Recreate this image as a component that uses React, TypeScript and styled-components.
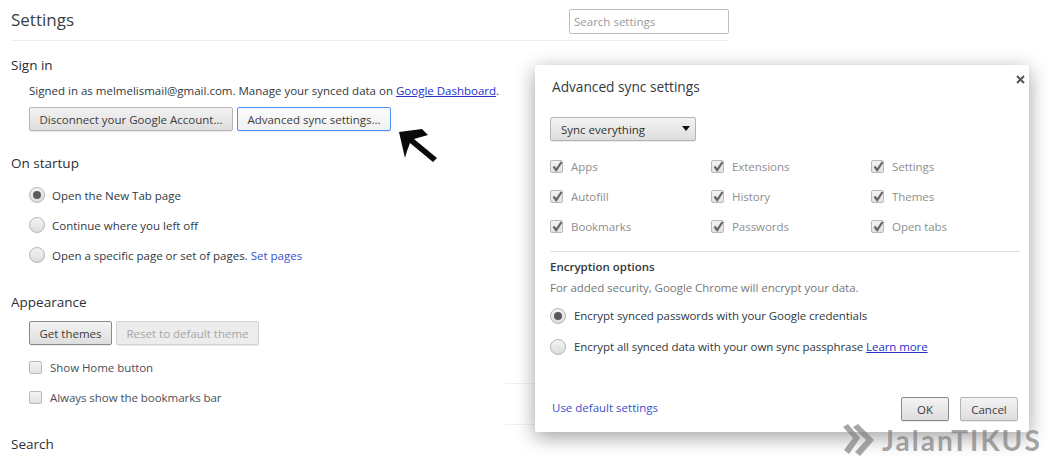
import React from "react";
import styled, { createGlobalStyle } from "styled-components";

const Global = createGlobalStyle`
  html, body { margin: 0; padding: 0; background: #fff; }
  body { width: 1059px; height: 457px; overflow: hidden; font-family: "Open Sans", "Noto Sans", sans-serif; font-size: 11.5px; color: #303942; }
`;

const Page = styled.div`
  position: relative;
  width: 1059px;
  height: 457px;
  overflow: hidden;
`;
const Main = styled.div`
  width: 718px;
  margin-left: 11px;
  display: flex;
  flex-direction: column;
`;
const Header = styled.header`
  height: 40px;
  box-sizing: content-box;
  border-bottom: 1px solid #eeeeee;
  display: flex;
  justify-content: space-between;
`;
const Title = styled.h1`
  margin: 9px 0 0;
  font-size: 17px;
  font-weight: 400;
  line-height: 22px;
  color: #3a3f45;
`;
const Search = styled.div`
  box-sizing: border-box;
  width: 160px;
  height: 25px;
  margin-top: 9px;
  border: 1px solid #bfbfbf;
  border-radius: 2px;
  padding-left: 4px;
  line-height: 23px;
  color: #9a9a9a;
`;
const Section = styled.section<{ $top: number }>`
  margin-top: ${(p) => p.$top}px;
`;
const Heading = styled.h3`
  margin: 0;
  font-size: 13.5px;
  font-weight: 400;
  line-height: 20px;
  color: #2b2f33;
`;
const Indent = styled.div<{ $top?: number }>`
  margin-left: 18px;
  margin-top: ${(p) => p.$top ?? 0}px;
`;
const TextLine = styled.div`
  line-height: 20px;
  white-space: nowrap;
`;
const Link = styled.a<{ $strong?: boolean; $lift?: number }>`
  color: ${(p) => (p.$strong ? "#2430c8" : "#3a50d0")};
  text-decoration: ${(p) => (p.$strong ? "underline" : "none")};
  padding-bottom: ${(p) => p.$lift ?? 0}px;
`;
const ButtonRow = styled.div<{ $top?: number }>`
  display: flex;
  gap: 4px;
  margin-top: ${(p) => p.$top ?? 0}px;
`;
const Button = styled.div<{ $w: number; $variant?: "focus" | "disabled" | "dark" }>`
  box-sizing: border-box;
  width: ${(p) => p.$w}px;
  height: 24px;
  border: 1px solid
    ${(p) =>
      p.$variant === "focus" ? "#4d90fe" : p.$variant === "disabled" ? "#d2d2d2" : p.$variant === "dark" ? "#8a8a8a" : "#b4b4b4"};
  border-radius: 2px;
  background: ${(p) =>
    p.$variant === "focus" ? "linear-gradient(#fbfbfb, #f1f1f1)" : p.$variant === "disabled" ? "#ececec" : "linear-gradient(#f3f3f3, #dedede)"};
  box-shadow: 0 1px 0 rgba(0, 0, 0, 0.08);
  display: flex;
  align-items: center;
  justify-content: center;
  color: ${(p) => (p.$variant === "disabled" ? "#a6a6a6" : "#3c3c3c")};
  white-space: nowrap;
`;
const RadioRow = styled.div<{ $h: number; $gap: number; $top?: number; $tight?: boolean }>`
  display: flex;
  align-items: center;
  height: ${(p) => p.$h}px;
  gap: ${(p) => p.$gap}px;
  margin-top: ${(p) => p.$top ?? 0}px;
  letter-spacing: ${(p) => (p.$tight ? "-0.08px" : "normal")};
  white-space: nowrap;
`;
const RadioDot = styled.span<{ $on?: boolean }>`
  box-sizing: border-box;
  flex: none;
  width: 16px;
  height: 16px;
  border-radius: 50%;
  border: 1px solid #b5b5b5;
  background: linear-gradient(#f4f4f4, #dcdcdc);
  display: flex;
  align-items: center;
  justify-content: center;
  &::after {
    content: "";
    display: ${(p) => (p.$on ? "block" : "none")};
    width: 8px;
    height: 8px;
    border-radius: 50%;
    background: #5a5a5a;
  }
`;
const CheckRow = styled.div<{ $muted?: boolean; $top?: number }>`
  display: flex;
  align-items: center;
  height: 30px;
  gap: 8px;
  margin-top: ${(p) => p.$top ?? 0}px;
  white-space: nowrap;
  letter-spacing: -0.05px;
  color: ${(p) => (p.$muted ? "#8e8e8e" : "#4a4f55")};
`;
const CheckBox = styled.span`
  box-sizing: border-box;
  position: relative;
  flex: none;
  width: 13px;
  height: 13px;
  border: 1px solid #b9b9b9;
  border-radius: 2px;
  background: linear-gradient(#f3f3f3, #e2e2e2);
  & svg {
    position: absolute;
    left: 0;
    top: -1px;
  }
`;
const Dialog = styled.div`
  position: absolute;
  left: 535px;
  top: 65px;
  box-sizing: border-box;
  width: 494px;
  height: 367px;
  background: #fff;
  border-radius: 2px;
  box-shadow: 0 5px 20px rgba(0, 0, 0, 0.38);
  padding: 0 9px 0 15px;
  display: flex;
  flex-direction: column;
`;
const Close = styled.div`
  position: absolute;
  right: 3px;
  top: 6px;
  width: 12px;
  height: 16px;
  display: flex;
  align-items: center;
  justify-content: center;
`;
const DialogTitle = styled.h2`
  margin: 11px 0 0 2px;
  font-size: 13.7px;
  font-weight: 400;
  line-height: 22px;
  color: #333a42;
`;
const SelectBox = styled.div`
  box-sizing: border-box;
  width: 146px;
  height: 24px;
  margin-top: 19px;
  border: 1px solid #b4b4b4;
  border-radius: 2px;
  background: linear-gradient(#f3f3f3, #dedede);
  box-shadow: 0 1px 0 rgba(0, 0, 0, 0.08);
  padding: 0 5px 0 10px;
  display: flex;
  align-items: center;
  justify-content: space-between;
  color: #333;
`;
const Caret = styled.span`
  width: 0;
  height: 0;
  border-left: 4.5px solid transparent;
  border-right: 4.5px solid transparent;
  border-top: 5px solid #111;
  margin-top: -2px;
`;
const CheckGrid = styled.div`
  display: grid;
  grid-template-columns: 161px 160px 1fr;
  margin-top: 10px;
`;
const Rule = styled.hr`
  width: 470px;
  margin: 10px 0 0;
  border: 0;
  border-top: 1px solid #dfdfdf;
`;
const SubHead = styled.div`
  margin-top: 5px;
  line-height: 20px;
  font-weight: 600;
  color: #33373c;
`;
const Hint = styled.div`
  margin-top: 1px;
  line-height: 20px;
  letter-spacing: -0.04px;
  color: #777;
  white-space: nowrap;
`;
const Footer = styled.div`
  margin-top: auto;
  margin-bottom: 11px;
  padding-left: 2px;
  padding-right: 2px;
  display: flex;
  align-items: center;
  justify-content: space-between;
`;
const Actions = styled.div`
  display: flex;
  gap: 11px;
`;
const Arrow = styled.svg`
  position: absolute;
  left: 395px;
  top: 125px;
`;
const FaintLine = styled.div<{ $top: number }>`
  position: absolute;
  left: 505px;
  top: ${(p) => p.$top}px;
  width: 40px;
  border-top: 1px solid #f0f0f0;
`;
const Watermark = styled.div`
  position: absolute;
  left: 841px;
  top: 423px;
  display: flex;
  align-items: center;
  gap: 7px;
  color: rgba(130, 130, 130, 0.72);
`;
const MarkText = styled.span`
  font-family: "Lato", sans-serif;
  font-weight: 700;
  font-size: 28px;
  line-height: 32px;
  white-space: nowrap;
  letter-spacing: 2px;
`;

const Check = () => (
  <CheckBox>
    <svg width="13" height="13" viewBox="0 0 13 13">
      <path d="M2.5 6.5 L5.2 10 L10.5 2" fill="none" stroke="#666" strokeWidth="2.2" />
    </svg>
  </CheckBox>
);

const rows = ["Apps", "Extensions", "Settings", "Autofill", "History", "Themes", "Bookmarks", "Passwords", "Open tabs"];

export default function App() {
  return (
    <Page>
      <Global />
      <Main>
        <Header>
          <Title>Settings</Title>
          <Search>Search settings</Search>
        </Header>
        <Section $top={14}>
          <Heading>Sign in</Heading>
          <Indent $top={6}>
            <TextLine>
              Signed in as melmelismail@gmail.com. Manage your synced data on <Link $strong>Google Dashboard</Link>.
            </TextLine>
            <ButtonRow $top={6}>
              <Button $w={204}>Disconnect your Google Account...</Button>
              <Button $w={154} $variant="focus">Advanced sync settings...</Button>
            </ButtonRow>
          </Indent>
        </Section>
        <Section $top={22}>
          <Heading>On startup</Heading>
          <Indent $top={7}>
            <RadioRow $h={30} $gap={7}><RadioDot $on />Open the New Tab page</RadioRow>
            <RadioRow $h={30} $gap={7}><RadioDot />Continue where you left off</RadioRow>
            <RadioRow $h={30} $gap={7}><RadioDot /><span>Open a specific page or set of pages. <Link>Set pages</Link></span></RadioRow>
          </Indent>
        </Section>
        <Section $top={22}>
          <Heading>Appearance</Heading>
          <Indent>
            <ButtonRow $top={9}>
              <Button $w={83} $variant="dark">Get themes</Button>
              <Button $w={143} $variant="disabled">Reset to default theme</Button>
            </ButtonRow>
            <CheckRow $top={7}><CheckBox />Show Home button</CheckRow>
            <CheckRow><CheckBox />Always show the bookmarks bar</CheckRow>
          </Indent>
        </Section>
        <Section $top={22}>
          <Heading>Search</Heading>
        </Section>
      </Main>
      <FaintLine $top={383} />
      <FaintLine $top={424} />
      <Arrow width="46" height="42" viewBox="0 0 46 42">
        <polygon points="4,7 27,4 33,10 19,14 42,33 38,37 15,18 12,26 10,33" fill="#0a0a0a" />
      </Arrow>
      <Dialog>
        <Close>
          <svg width="9" height="9" viewBox="0 0 9 9">
            <path d="M1 1 L8 8 M8 1 L1 8" stroke="#555" strokeWidth="2" />
          </svg>
        </Close>
        <DialogTitle>Advanced sync settings</DialogTitle>
        <SelectBox>Sync everything<Caret /></SelectBox>
        <CheckGrid>
          {rows.map((r) => (
            <CheckRow key={r} $muted><Check />{r}</CheckRow>
          ))}
        </CheckGrid>
        <Rule />
        <SubHead>Encryption options</SubHead>
        <Hint>For added security, Google Chrome will encrypt your data.</Hint>
        <RadioRow $h={31} $gap={8} $top={2} $tight><RadioDot $on />Encrypt synced passwords with your Google credentials</RadioRow>
        <RadioRow $h={31} $gap={8} $tight><RadioDot /><span>Encrypt all synced data with your own sync passphrase <Link $strong>Learn more</Link></span></RadioRow>
        <Footer>
          <Link $lift={3}>Use default settings</Link>
          <Actions>
            <Button $w={48} $variant="dark">OK</Button>
            <Button $w={58}>Cancel</Button>
          </Actions>
        </Footer>
      </Dialog>
      <Watermark>
        <svg width="34" height="34" viewBox="0 0 34 34">
          <path d="M2 4 L7 1 L19 15 L8 31 L3 27 L12 15 Z M12 4 L17 1 L33 17 L19 33 L14 29 L25 17 Z" fill="currentColor" />
        </svg>
        <MarkText>JalanTIKUS</MarkText>
      </Watermark>
    </Page>
  );
}
